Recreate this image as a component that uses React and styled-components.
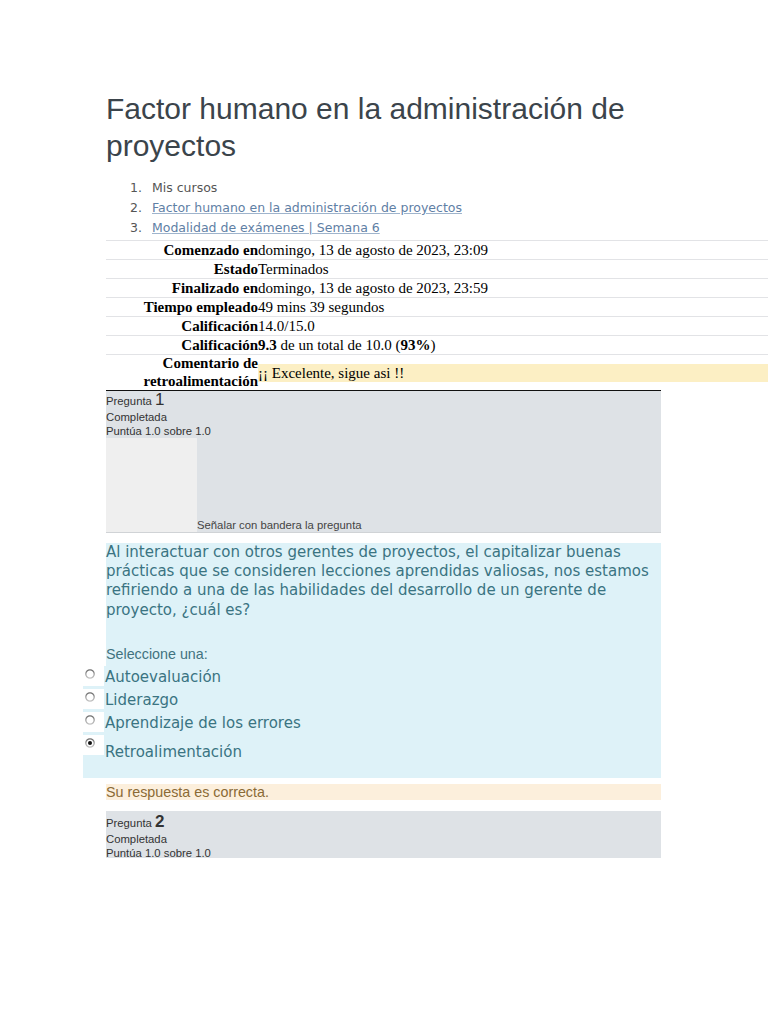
import styled, { createGlobalStyle } from 'styled-components'

const GlobalStyle = createGlobalStyle`
  html, body {
    margin: 0;
    padding: 0;
    background: #fff;
    overflow-x: hidden;
  }
  body {
    font-family: "Liberation Sans", Arial, sans-serif;
  }
`;

const summary = [
  { label: 'Comenzado en', value: 'domingo, 13 de agosto de 2023, 23:09' },
  { label: 'Estado', value: 'Terminados' },
  { label: 'Finalizado en', value: 'domingo, 13 de agosto de 2023, 23:59' },
  { label: 'Tiempo empleado', value: '49 mins 39 segundos' },
  { label: 'Calificación', value: '14.0/15.0' },
  { label: 'Calificación', value: <><b>9.3</b> de un total de 10.0 (<b>93%</b>)</> },
];

const options = [
  { text: 'Autoevaluación' },
  { text: 'Liderazgo' },
  { text: 'Aprendizaje de los errores' },
  { text: 'Retroalimentación', checked: true },
];

const Radio = ({ checked }) => (
  <svg width="10" height="10" viewBox="0 0 10 10">
    <defs>
      <linearGradient id="rg" x1="0" y1="0" x2="0" y2="1">
        <stop offset="0" stopColor="#6b6b6b" />
        <stop offset="1" stopColor="#c4c4c4" />
      </linearGradient>
    </defs>
    <circle cx="5" cy="5" r="4.2" fill="#fff" stroke="url(#rg)" strokeWidth="1.2" />
    {checked && <circle cx="5" cy="5" r="2" fill="#111" />}
  </svg>
);

const App = () => {
  return (
    <Page>
      <GlobalStyle />
      <Title>Factor humano en la administración de proyectos</Title>
      <Crumbs>
        <li>Mis cursos</li>
        <li><a href="#">Factor humano en la administración de proyectos</a></li>
        <li><a href="#">Modalidad de exámenes | Semana 6</a></li>
      </Crumbs>

      <Summary>
        {summary.map((row, i) => (
          <SummaryRow key={i}>
            <SummaryLabel>{row.label}</SummaryLabel>
            <SummaryValue>{row.value}</SummaryValue>
          </SummaryRow>
        ))}
        <SummaryRow>
          <SummaryLabel $tall>Comentario de<br />retroalimentación</SummaryLabel>
          <Feedback>¡¡ Excelente, sigue asi !!</Feedback>
        </SummaryRow>
      </Summary>

      <QuestionInfo $first>
        <InfoLine>Pregunta <Num>1</Num></InfoLine>
        <InfoLine>Completada</InfoLine>
        <InfoLine>Puntúa 1.0 sobre 1.0</InfoLine>
        <FlagRow>
          <FlagPad />
          <FlagText>Señalar con bandera la pregunta</FlagText>
        </FlagRow>
      </QuestionInfo>

      <QuestionBox>
        <QuestionText>
          Al interactuar con otros gerentes de proyectos, el capitalizar buenas
          prácticas que se consideren lecciones aprendidas valiosas, nos estamos
          refiriendo a una de las habilidades del desarrollo de un gerente de
          proyecto, ¿cuál es?
        </QuestionText>
        <Prompt>Seleccione una:</Prompt>
        <Answers>
          {options.map((opt) => (
            <Option key={opt.text} $last={opt.checked}>
              <RadioCell><Radio checked={opt.checked} /></RadioCell>
              <OptionLabel $last={opt.checked}>{opt.text}</OptionLabel>
            </Option>
          ))}
        </Answers>
      </QuestionBox>

      <Outcome>Su respuesta es correcta.</Outcome>

      <QuestionInfo>
        <InfoLine>Pregunta <Num $bold>2</Num></InfoLine>
        <InfoLine>Completada</InfoLine>
        <InfoLine>Puntúa 1.0 sobre 1.0</InfoLine>
      </QuestionInfo>
    </Page>
  )
}

export default App

const Page = styled.div`
  margin-left: 106px;
  width: 555px;
  padding-top: 90px;
  padding-bottom: 120px;
`;

const Title = styled.h1`
  margin: 0;
  font-family: "Liberation Sans", Arial, sans-serif;
  font-weight: normal;
  font-size: 30px;
  line-height: 37px;
  color: #3b444b;
  width: 540px;
`;

const Crumbs = styled.ol`
  margin: 14px 0 2px;
  padding-left: 24px;
  list-style: none;
  counter-reset: crumb;
  font-family: "DejaVu Sans", Verdana, sans-serif;
  font-size: 12.5px;
  line-height: 20px;
  color: #555;

  li {
    counter-increment: crumb;
  }

  li::before {
    content: counter(crumb) ".";
    display: inline-block;
    width: 22px;
    color: #555;
  }

  a {
    color: #5f80a5;
    text-decoration: underline;
    text-decoration-color: #9fb4cc;
  }
`;

const Summary = styled.div`
  width: 662px;
  font-family: "Liberation Serif", "Times New Roman", serif;
  font-size: 15px;
  color: #000;
`;

const SummaryRow = styled.div`
  display: flex;
  border-top: 1px solid #e2e3e6;
`;

const SummaryLabel = styled.div`
  width: 152px;
  flex: none;
  text-align: right;
  font-weight: bold;
  line-height: ${(p) => (p.$tall ? '17.5px' : '18px')};
  white-space: nowrap;
`;

const SummaryValue = styled.div`
  line-height: 18px;
  white-space: nowrap;
`;

const Feedback = styled.div`
  flex: 1;
  align-self: center;
  background: #fcefc4;
  line-height: 18px;
  margin-top: 1px;
`;

const QuestionInfo = styled.div`
  background: #dee2e6;
  border-top: ${(p) => (p.$first ? '1px solid #111' : 'none')};
  border-bottom: ${(p) => (p.$first ? '1px solid #d0d3d6' : 'none')};
  margin-top: ${(p) => (p.$first ? '0' : '11px')};
  padding-top: ${(p) => (p.$first ? '0' : '2px')};
  height: ${(p) => (p.$first ? 'auto' : '47px')};
  box-sizing: border-box;
  font-family: "Liberation Sans", Arial, sans-serif;
  font-size: 11.3px;
  color: #333;
`;

const InfoLine = styled.div`
  line-height: 14px;

  &:first-child {
    line-height: 18px;
  }
`;

const Num = styled.span`
  font-size: 17px;
  font-weight: ${(p) => (p.$bold ? 'bold' : 'normal')};
`;

const FlagRow = styled.div`
  display: flex;
  align-items: flex-end;
`;

const FlagPad = styled.div`
  width: 91px;
  height: 94px;
  background: #efefef;
`;

const FlagText = styled.div`
  line-height: 14px;
  color: #444;
`;

const QuestionBox = styled.div`
  margin-top: 10px;
  background: #def2f8;
  color: #3a7482;
`;

const QuestionText = styled.p`
  margin: 0;
  font-family: "DejaVu Sans", Verdana, sans-serif;
  font-size: 15px;
  line-height: 19.2px;
`;

const Prompt = styled.div`
  margin-top: 25px;
  font-family: "Liberation Sans", Arial, sans-serif;
  font-size: 14.3px;
  line-height: 18px;
  color: #42737f;
`;

const Answers = styled.div`
  margin-left: -23px;
  margin-top: 3px;
  padding-bottom: 15px;
  background: #def2f8;
`;

const Option = styled.div`
  display: flex;
  align-items: flex-start;
  height: ${(p) => (p.$last ? 'auto' : '23px')};
`;

const RadioCell = styled.div`
  width: 21px;
  height: 20px;
  flex: none;
  background: #fff;
  display: flex;
  justify-content: flex-start;
  padding: 3px 0 0 2px;
  box-sizing: border-box;
`;

const OptionLabel = styled.div`
  margin-left: 1px;
  padding-top: ${(p) => (p.$last ? '6px' : '0')};
  font-family: "DejaVu Sans", Verdana, sans-serif;
  font-size: 15px;
  line-height: 22px;
`;

const Outcome = styled.div`
  margin-top: 6px;
  background: #fcefdc;
  font-family: "Liberation Sans", Arial, sans-serif;
  font-size: 14.3px;
  line-height: 16px;
  color: #8a6a35;
`;
